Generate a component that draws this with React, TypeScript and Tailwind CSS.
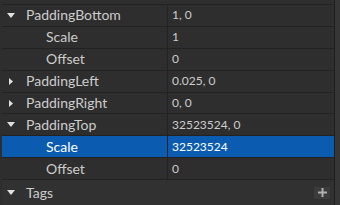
import React from 'react';

type Row = {
  name: string;
  value: string;
  depth: 0 | 1;
  arrow?: 'down' | 'right';
  selected?: boolean;
};

const rows: Row[] = [
  { name: 'PaddingBottom', value: '1, 0', depth: 0, arrow: 'down' },
  { name: 'Scale', value: '1', depth: 1 },
  { name: 'Offset', value: '0', depth: 1 },
  { name: 'PaddingLeft', value: '0.025, 0', depth: 0, arrow: 'right' },
  { name: 'PaddingRight', value: '0, 0', depth: 0, arrow: 'right' },
  { name: 'PaddingTop', value: '32523524, 0', depth: 0, arrow: 'down' },
  { name: 'Scale', value: '32523524', depth: 1, selected: true },
  { name: 'Offset', value: '0', depth: 1 },
];

const Arrow: React.FC<{ dir: 'down' | 'right' }> = ({ dir }) =>
  dir === 'down' ? (
    <svg width="8" height="5" viewBox="0 0 8 5" className="block">
      <path d="M0 0H8L4 5Z" fill="#e0e0e0" />
    </svg>
  ) : (
    <svg width="4" height="7" viewBox="0 0 4 7" className="block">
      <path d="M0 0V7L4 3.5Z" fill="#e0e0e0" />
    </svg>
  );

const PropertyRow: React.FC<{ row: Row }> = ({ row }) => (
  <div
    className={`flex h-[22px] border-b border-[#222222] ${
      row.selected ? 'bg-[#0b5cb0] text-white' : 'text-[#cccccc]'
    }`}
  >
    <div className="flex items-center w-[166px] border-r border-[#222222] shrink-0 text-[14px]">
      {row.depth === 0 ? (
        <>
          <span className="w-[18px] flex justify-center">{row.arrow && <Arrow dir={row.arrow} />}</span>
          <span className="ml-[6px]">{row.name}</span>
        </>
      ) : (
        <span className="pl-[44px]">{row.name}</span>
      )}
    </div>
    <div className="flex items-center pl-[4px] flex-1 text-[12px]">{row.value}</div>
  </div>
);

export default function App() {
  return (
    <div
      className="w-[340px] h-[205px] flex bg-[#2e2e2e] overflow-hidden leading-none"
      style={{ fontFamily: 'Lato, "Noto Sans", sans-serif' }}
    >
      <div className="flex-1 flex flex-col pl-[2px] border-r border-[#1f1f1f]">
        <div className="h-[5px] border-b border-[#222222] shrink-0" />
        {rows.map((r, i) => (
          <PropertyRow key={i} row={r} />
        ))}
        <div className="flex items-center h-[25px] bg-[#313131] text-[#cccccc] text-[14px]">
          <span className="w-[18px] flex justify-center"><Arrow dir="down" /></span>
          <span className="ml-[6px] flex-1">Tags</span>
          <span className="w-[16px] h-[12px] mr-[4px] flex items-center justify-center bg-[#3b3b3b]">
            <svg width="9" height="9" viewBox="0 0 9 9">
              <path d="M4.5 0V9M0 4.5H9" stroke="#b0b0b0" strokeWidth="2" />
            </svg>
          </span>
        </div>
      </div>
      <div className="w-[5px] bg-[#363636]" />
    </div>
  );
}
